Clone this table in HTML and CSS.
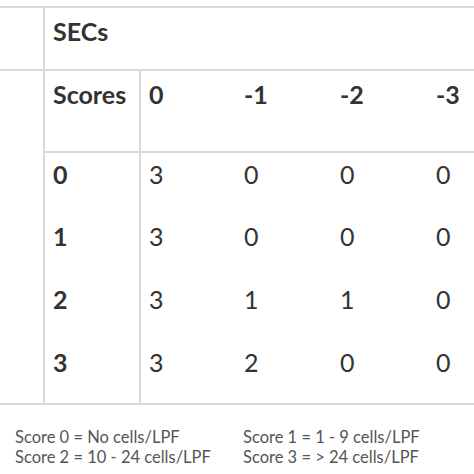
FILE: index.html
```html
<!DOCTYPE html>
<html>
<head>
<meta charset="utf-8">
<link rel="stylesheet" href="styles.css">
</head>
<body>
<div class="page">
  <table class="grid">
    <colgroup>
      <col class="c-stub"><col class="c-label"><col class="c-val"><col class="c-val"><col class="c-val"><col class="c-val">
    </colgroup>
    <tr class="r-title">
      <td class="stub"></td>
      <td class="head title" colspan="5">SECs</td>
    </tr>
    <tr class="r-head">
      <td class="stub stub-body" rowspan="5"></td>
      <td class="head label">Scores</td>
      <td class="head">0</td>
      <td class="head">-1</td>
      <td class="head">-2</td>
      <td class="head">-3</td>
    </tr>
    <tr class="r-data first">
      <td class="head label">0</td><td class="val">3</td><td class="val">0</td><td class="val">0</td><td class="val">0</td>
    </tr>
    <tr class="r-data">
      <td class="head label">1</td><td class="val">3</td><td class="val">0</td><td class="val">0</td><td class="val">0</td>
    </tr>
    <tr class="r-data">
      <td class="head label">2</td><td class="val">3</td><td class="val">1</td><td class="val">1</td><td class="val">0</td>
    </tr>
    <tr class="r-data last">
      <td class="head label">3</td><td class="val">3</td><td class="val">2</td><td class="val">0</td><td class="val">0</td>
    </tr>
  </table>
  <div class="legend">
    <span>Score 0 = No cells/LPF</span>
    <span>Score 1 = 1 - 9 cells/LPF</span>
    <span>Score 2 = 10 - 24 cells/LPF</span>
    <span>Score 3 = &gt; 24 cells/LPF</span>
  </div>
</div>
</body>
</html>
```
FILE: styles.css
```css
html, body {
  margin: 0;
  padding: 0;
  background: #ffffff;
  overflow: hidden;
}
.page {
  width: 474px;
  height: 474px;
  overflow: hidden;
  padding-top: 6px;
  box-sizing: border-box;
}
.grid {
  border-collapse: collapse;
  table-layout: fixed;
  width: 524px;
  font-family: Lato, "Liberation Sans", sans-serif;
}
.c-stub { width: 44px; }
.c-label { width: 96px; }
.c-val { width: 96px; }
.grid td {
  padding: 0 0 0 8px;
  vertical-align: top;
  font-size: 25px;
  line-height: 30px;
  color: #333333;
  border: 0 solid #d9d9d9;
}
.stub { border-right-width: 2px !important; border-top-width: 2px !important; }
.stub-body { border-bottom-width: 2px !important; }
.r-title td { height: 63px; border-top-width: 2px; padding-top: 8px; box-sizing: border-box; }
.r-head td { height: 82px; border-top-width: 2px; padding-top: 8px; box-sizing: border-box; }
.r-data td { height: 63px; padding-top: 6px; box-sizing: border-box; }
.r-data.first td { border-top-width: 2px; }
.r-data.last td { border-bottom-width: 2px; }
.head { font-weight: 700; color: #333333; }
.label { border-right-width: 2px !important; }
.val { font-weight: 400; color: #474747; }
.legend {
  display: grid;
  grid-template-columns: 228px auto;
  padding: 22px 0 0 15px;
  font-family: Lato, "Liberation Sans", sans-serif;
  font-size: 16.5px;
  line-height: 20px;
  color: #555555;
}
```
